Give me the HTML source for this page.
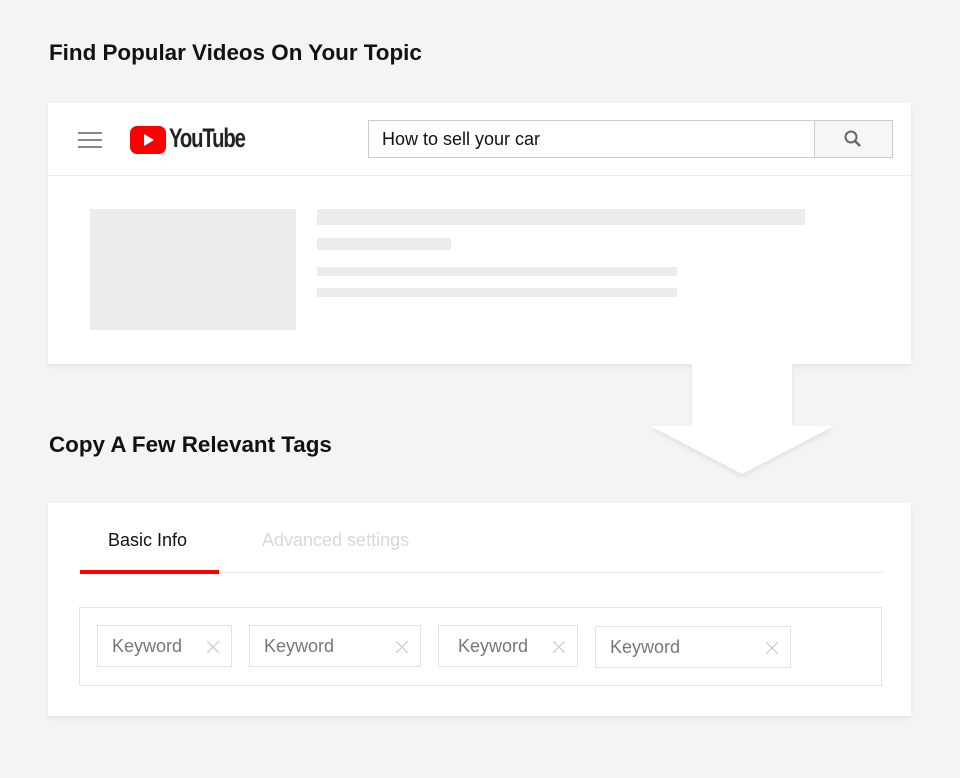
<!DOCTYPE html>
<html><head><meta charset="utf-8"><style>
*{margin:0;padding:0;box-sizing:border-box}
body{width:960px;height:778px;background:#f4f4f4;font-family:"Liberation Sans",Arial,sans-serif;position:relative;overflow:hidden}
.abs{position:absolute}
h1{position:absolute;font-size:22.4px;font-weight:bold;color:#111}
.card{position:absolute;background:#fff;box-shadow:0 3px 4px rgba(0,0,0,0.06)}
.bar{position:absolute;background:#ececec}
.kw{position:absolute;top:625px;height:42px;border:1px solid #e2e2e2;font-size:18px;color:#777;padding:10px 0 0 14px}
.kw svg{position:absolute;right:12px;top:15px}
</style></head><body>
<h1 style="left:49px;top:40px">Find Popular Videos On Your Topic</h1>
<div class="card" style="left:48px;top:103px;width:863px;height:261px">
  <div class="abs" style="left:0;top:72px;width:863px;height:1px;background:#ececec"></div>
  <div class="abs" style="left:30px;top:29px;width:24px;height:2px;background:#888"></div>
  <div class="abs" style="left:30px;top:36px;width:24px;height:2px;background:#888"></div>
  <div class="abs" style="left:30px;top:43px;width:24px;height:2px;background:#888"></div>
  <svg class="abs" style="left:82px;top:23px" width="36" height="28" viewBox="0 0 36 28"><rect width="36" height="28" rx="7" fill="#f00"/><path d="M14 8 L24 14 L14 20Z" fill="#fff"/></svg>
  <div class="abs" style="left:121px;top:20px;font-size:27px;font-weight:bold;color:#222;letter-spacing:-1.5px;transform:scaleX(0.75);transform-origin:left">YouTube</div>
  <div class="abs" style="left:320px;top:17px;width:447px;height:38px;border:1px solid #ccc;font-size:18px;color:#111;padding:8px 0 0 13px">How to sell your car</div>
  <div class="abs" style="left:767px;top:17px;width:78px;height:38px;border:1px solid #ccc;border-left:none;background:#f6f6f6"></div>
  <svg class="abs" style="left:795px;top:26px" width="20" height="20" viewBox="0 0 20 20"><circle cx="8" cy="8" r="5.5" fill="none" stroke="#666" stroke-width="2"/><path d="M12 12 L17 17" stroke="#666" stroke-width="2.5"/></svg>
  <div class="bar" style="left:42px;top:106px;width:206px;height:121px"></div>
  <div class="bar" style="left:269px;top:106px;width:488px;height:16px"></div>
  <div class="bar" style="left:269px;top:135px;width:134px;height:12px"></div>
  <div class="bar" style="left:269px;top:164px;width:360px;height:9px"></div>
  <div class="bar" style="left:269px;top:185px;width:360px;height:9px"></div>
</div>
<svg class="abs" style="left:640px;top:364px" width="210" height="120" viewBox="0 0 210 120">
  <defs><filter id="s"><feDropShadow dx="0" dy="3" stdDeviation="2" flood-opacity="0.08"/></filter></defs>
  <path d="M52 0 H152 V62 H194 L102 110 L11 62 H52 Z" fill="#fff" filter="url(#s)"/>
</svg>
<h1 style="left:49px;top:432px">Copy A Few Relevant Tags</h1>
<div class="card" style="left:48px;top:503px;width:863px;height:213px">
  <div class="abs" style="left:60px;top:27px;font-size:18px;color:#111">Basic Info</div>
  <div class="abs" style="left:214px;top:27px;font-size:18px;color:#d8d8d8">Advanced settings</div>
  <div class="abs" style="left:32px;top:69px;width:803px;height:1px;background:#ececec"></div>
  <div class="abs" style="left:32px;top:67px;width:139px;height:4px;background:#f00"></div>
  <div class="abs" style="left:31px;top:104px;width:803px;height:79px;border:1px solid #e2e2e2"></div>
</div>
<div class="kw" style="left:97px;width:135px">Keyword<svg width="12" height="12"><path d="M0 0L12 12M12 0L0 12" stroke="#ccc" stroke-width="1.2"/></svg></div>
<div class="kw" style="left:249px;width:172px">Keyword<svg width="12" height="12"><path d="M0 0L12 12M12 0L0 12" stroke="#ccc" stroke-width="1.2"/></svg></div>
<div class="kw" style="left:438px;width:140px;padding-left:19px">Keyword<svg width="12" height="12"><path d="M0 0L12 12M12 0L0 12" stroke="#ccc" stroke-width="1.2"/></svg></div>
<div class="kw" style="left:595px;top:626px;width:196px">Keyword<svg width="12" height="12"><path d="M0 0L12 12M12 0L0 12" stroke="#ccc" stroke-width="1.2"/></svg></div>
</body></html>
